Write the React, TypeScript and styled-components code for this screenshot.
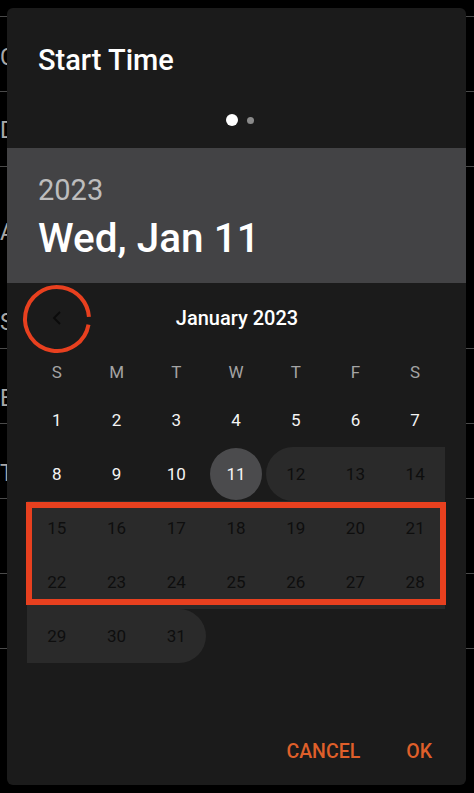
import React from 'react';
import styled, { createGlobalStyle } from 'styled-components';

const GlobalStyle = createGlobalStyle`
  html, body {
    margin: 0;
    padding: 0;
    background: #000;
  }
  body {
    font-family: Roboto, "Noto Sans", "Liberation Sans", sans-serif;
  }
`

const WEEKDAYS = ['S', 'M', 'T', 'W', 'T', 'F', 'S']
const SELECTED = 11
const RANGE_START = 12
const RANGE_END = 31

// settings list that sits behind the dialog
const BACK_ROWS = [
  { height: 75, pad: 28, lines: ['Category'] },
  { height: 75, pad: 26, lines: ['Date'] },
  { height: 182, pad: 53, lines: ['All day', 'Start'] },
  { height: 75, pad: 37, lines: ['End'] },
  { height: 75, pad: 37, lines: ['Time zone'] },
  { height: 75, pad: 37, lines: [''] },
  { height: 75, pad: 37, lines: [''] },
  { height: 75, pad: 37, lines: [''] },
]

function ChevronLeft() {
  return (
    <svg width="14" height="16" viewBox="0 0 14 16">
      <polyline points="9,2 3,8 9,14" fill="none" stroke="#0b0b0b" strokeWidth="1.8" />
    </svg>
  )
}

function App() {
  const days = Array.from({ length: 31 }, (_, i) => i + 1)

  return (
    <Page>
      <GlobalStyle />

      <BackList>
        {BACK_ROWS.map((row, i) => (
          <BackRow key={i} $height={row.height} $pad={row.pad}>
            {row.lines.map((l, j) => <BackText key={j}>{l}</BackText>)}
          </BackRow>
        ))}
      </BackList>

      <Dialog>
        <Title>Start Time</Title>
        <Dots>
          <Dot $active />
          <Dot />
        </Dots>

        <Header>
          <Year>2023</Year>
          <DateText>Wed, Jan 11</DateText>
        </Header>

        <MonthNav>
          <NavButton><ChevronLeft /></NavButton>
          <MonthLabel>January 2023</MonthLabel>
        </MonthNav>

        <Grid>
          {WEEKDAYS.map((d, i) => <WeekDay key={i}>{d}</WeekDay>)}
        </Grid>

        <Grid>
          {days.map(d => {
            const inRange = d >= RANGE_START && d <= RANGE_END
            return (
              <DayCell
                key={d}
                $inRange={inRange}
                $first={d === RANGE_START}
                $last={d === RANGE_END}
              >
                <DayNum $selected={d === SELECTED} $inRange={inRange}>{d}</DayNum>
              </DayCell>
            )
          })}
        </Grid>

        <Actions>
          <ActionButton>CANCEL</ActionButton>
          <ActionButton>OK</ActionButton>
        </Actions>
      </Dialog>

      {/* hand-drawn red markup over the screenshot */}
      <Markup width="474" height="793" viewBox="0 0 474 793">
        <circle cx="57" cy="319" r="32" fill="none" stroke="#e8401f" strokeWidth="4"
          strokeDasharray="193 8" transform="rotate(10 57 319)" />
        <rect x="29" y="505" width="414" height="97" fill="none" stroke="#e8401f" strokeWidth="6" />
      </Markup>
    </Page>
  )
}


const Page = styled.div`
  position: relative;
  width: 474px;
  height: 793px;
  overflow: hidden;
  background: #000;
`

const BackList = styled.div`
  display: flex;
  flex-direction: column;
  padding-top: 16px;
`

const BackRow = styled.div<{ $height: number; $pad: number }>`
  display: flex;
  flex-direction: column;
  gap: 64px;
  height: ${p => p.$height}px;
  box-sizing: border-box;
  border-top: 1px solid #4a4a4a;
  padding-top: ${p => p.$pad}px;
`

const BackText = styled.div`
  color: #a8a8a8;
  font-size: 23px;
  line-height: 26px;
  white-space: nowrap;
`

const Dialog = styled.div`
  position: absolute;
  left: 7px;
  top: 8px;
  width: 459px;
  height: 777px;
  box-sizing: border-box;
  background: #1b1b1b;
  border-radius: 6px;
  display: flex;
  flex-direction: column;
  overflow: hidden;
`

const Title = styled.div`
  color: #fff;
  font-size: 29px;
  font-weight: 500;
  line-height: 30px;
  padding: 37px 0 0 31px;
`

const Dots = styled.div`
  display: flex;
  justify-content: center;
  align-items: center;
  gap: 9px;
  height: 12px;
  margin: 39px 0 22px;
  padding-left: 6px;
`

const Dot = styled.span<{ $active?: boolean }>`
  width: ${p => (p.$active ? 12 : 7)}px;
  height: ${p => (p.$active ? 12 : 7)}px;
  border-radius: 50%;
  background: ${p => (p.$active ? '#fff' : '#8a8a8a')};
`

const Header = styled.div`
  background: #434345;
  height: 135px;
  box-sizing: border-box;
  padding: 26px 0 0 31px;
  display: flex;
  flex-direction: column;
  gap: 10px;
`

const Year = styled.div`
  color: #bdbdbd;
  font-size: 29px;
  line-height: 32px;
`

const DateText = styled.div`
  color: #fff;
  font-size: 40.5px;
  font-weight: 500;
  line-height: 44px;
`

const MonthNav = styled.div`
  position: relative;
  display: flex;
  align-items: center;
  justify-content: center;
  height: 70px;
`

const NavButton = styled.div`
  position: absolute;
  left: 44px;
  top: 27px;
  display: flex;
`

const MonthLabel = styled.div`
  color: #fff;
  font-size: 20px;
  font-weight: 500;
  padding-left: 1px;
`

const Grid = styled.div`
  display: grid;
  grid-template-columns: repeat(7, 1fr);
  margin: 0 21px 0 20px;
`

const WeekDay = styled.div`
  color: #a4a4a4;
  font-size: 17px;
  text-align: center;
  line-height: 20px;
  padding: 9px 0 11px;
`

const DayCell = styled.div<{ $inRange: boolean; $first: boolean; $last: boolean }>`
  height: 54px;
  display: flex;
  align-items: center;
  justify-content: center;
  background: ${p => (p.$inRange ? '#2a2a2a' : 'transparent')};
  border-radius: ${p => (p.$first ? '27px 0 0 27px' : p.$last ? '0 27px 27px 0' : '0')};
`

const DayNum = styled.span<{ $selected: boolean; $inRange: boolean }>`
  width: 52px;
  height: 52px;
  border-radius: 50%;
  display: flex;
  align-items: center;
  justify-content: center;
  font-size: 17px;
  color: ${p => (p.$inRange ? '#0e0e0e' : '#f4f4f4')};
  background: ${p => (p.$selected ? '#4b4b4d' : 'transparent')};
`

const Actions = styled.div`
  margin-top: auto;
  display: flex;
  justify-content: flex-end;
  gap: 46px;
  padding: 0 34px 22px 0;
`

const ActionButton = styled.div`
  color: #df5f2a;
  font-size: 19.5px;
  font-weight: 500;
  line-height: 22px;
`

const Markup = styled.svg`
  position: absolute;
  left: 0;
  top: 0;
  pointer-events: none;
`


export default App
